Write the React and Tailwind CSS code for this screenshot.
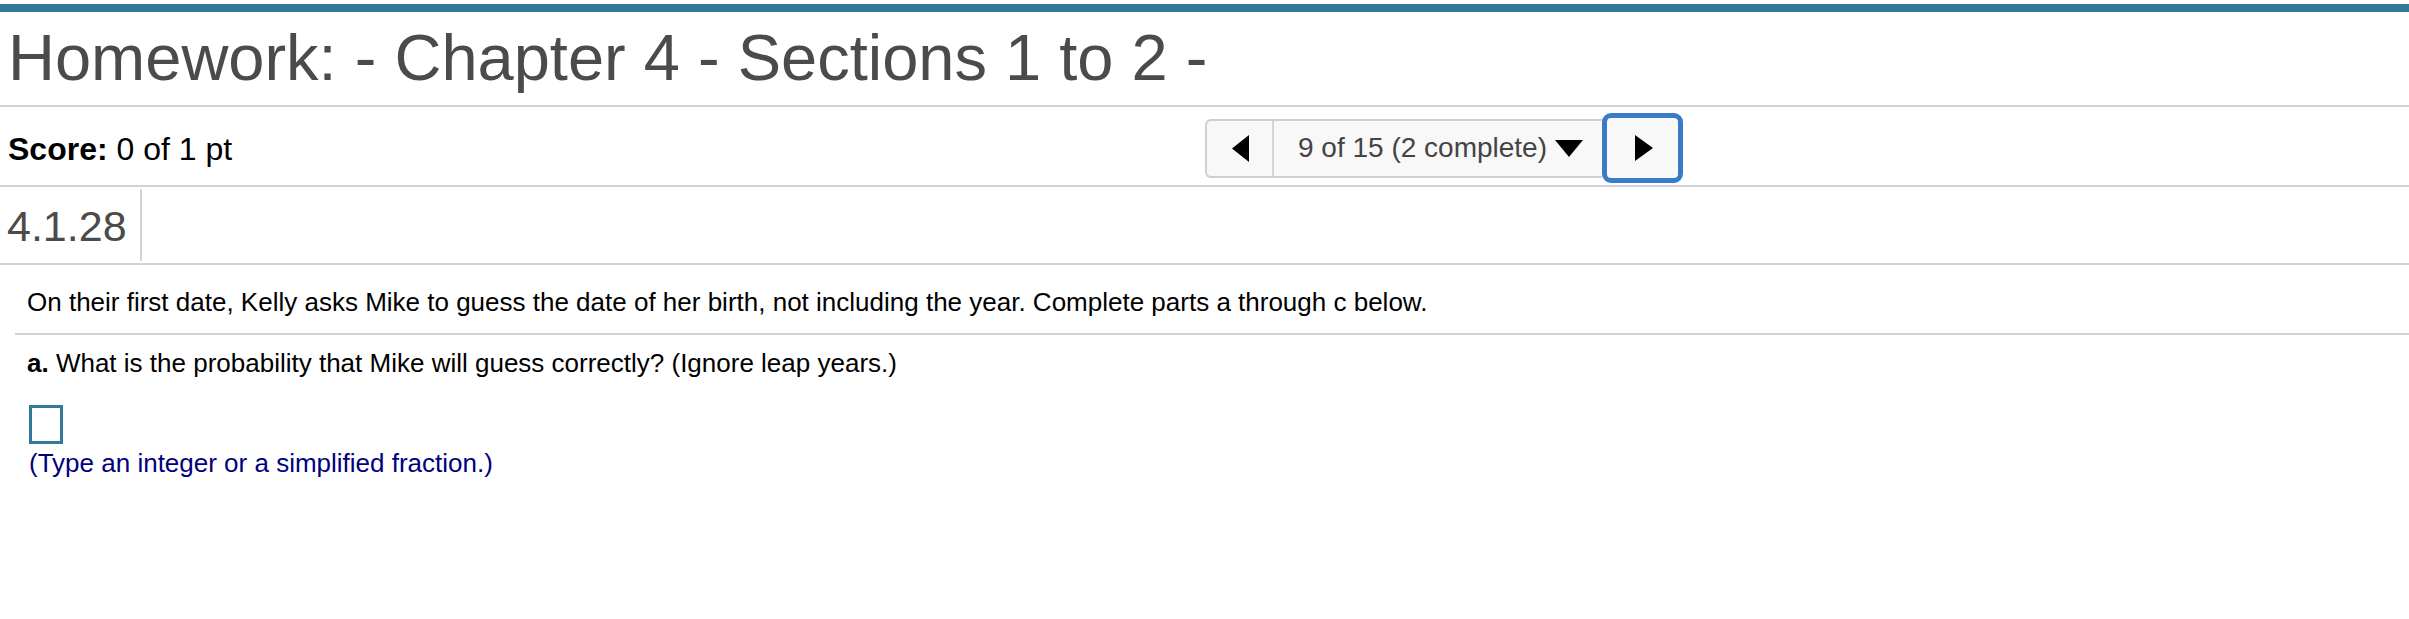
import React from "react";

const font = { fontFamily: '"Liberation Sans", Arial, Helvetica, sans-serif' };

function Tri({ dir, w, h }) {
  const pts =
    dir === "left"
      ? `${w},0 ${w},${h} 0,${h / 2}`
      : dir === "right"
      ? `0,0 0,${h} ${w},${h / 2}`
      : `0,0 ${w},0 ${w / 2},${h}`;
  return (
    <svg width={w} height={h} viewBox={`0 0 ${w} ${h}`} className="block">
      <polygon points={pts} fill="#000" />
    </svg>
  );
}

export default function App() {
  return (
    <div className="w-full min-h-screen bg-white pt-[4px]" style={font}>
      {/* top bar */}
      <div className="h-[8px] bg-[#34799a]" />

      {/* title */}
      <div className="h-[95px] border-b-2 border-[#d0d2dc] pt-[13px] pl-[8px]">
        <h1 className="text-[65px] leading-none text-[#4b4b4b] font-normal">
          Homework: - Chapter 4 - Sections 1 to 2 -
        </h1>
      </div>

      {/* score + nav */}
      <div className="h-[80px] border-b-2 border-[#d0d2dc] flex items-start">
        <div className="w-[1205px] pl-[8px] pt-[26px] text-[32px] leading-none text-black">
          <span className="font-bold">Score:</span> 0 of 1 pt
        </div>
        <div className="mt-[6px] flex items-center">
          <div className="h-[59px] flex border-2 border-r-0 border-[#cfcfcf] rounded-l-[6px] bg-[#f8f8f8]">
            <div className="w-[67px] border-r-2 border-[#d6d6d6] flex items-center justify-center pl-[2px]">
              <Tri dir="left" w={17} h={27} />
            </div>
            <div className="w-[328px] flex items-center pl-[24px] text-[28px] leading-none text-[#444]">
              <span>9 of 15 (2 complete)</span>
              <span className="ml-[8px]">
                <Tri dir="down" w={28} h={17} />
              </span>
            </div>
          </div>
          <div className="w-[81px] h-[70px] border-[5px] border-[#3a7bc8] rounded-[9px] bg-[#f8f8f8] flex items-center justify-center pl-[2px]">
            <Tri dir="right" w={18} h={26} />
          </div>
        </div>
      </div>

      {/* question id */}
      <div className="h-[78px] border-b-2 border-[#d0d2dc] flex items-center">
        <div className="w-[142px] h-[72px] border-r-2 border-[#d0d2dc] flex items-center pl-[7px] pt-[3px] text-[43px] leading-none text-[#4b4b4b]">
          4.1.28
        </div>
      </div>

      {/* content */}
      <div className="ml-[15px]">
        <div className="border-b-2 border-[#d0d2dc] pl-[12px] pt-[24px] pb-[18px] text-[26px] leading-none text-black">
          On their first date, Kelly asks Mike to guess the date of her birth, not including the year. Complete parts a through c below.
        </div>
        <div className="pl-[12px]">
          <p className="mt-[15px] text-[26px] leading-none text-black">
            <span className="font-bold">a.</span> What is the probability that Mike will guess correctly? (Ignore leap years.)
          </p>
          <div className="mt-[29px] ml-[2px] w-[34px] h-[39px] border-[3px] border-[#34799a] bg-white" />
          <p className="mt-[6px] ml-[2px] text-[26px] leading-none text-[#00007f]">
            (Type an integer or a simplified fraction.)
          </p>
        </div>
      </div>
    </div>
  );
}
